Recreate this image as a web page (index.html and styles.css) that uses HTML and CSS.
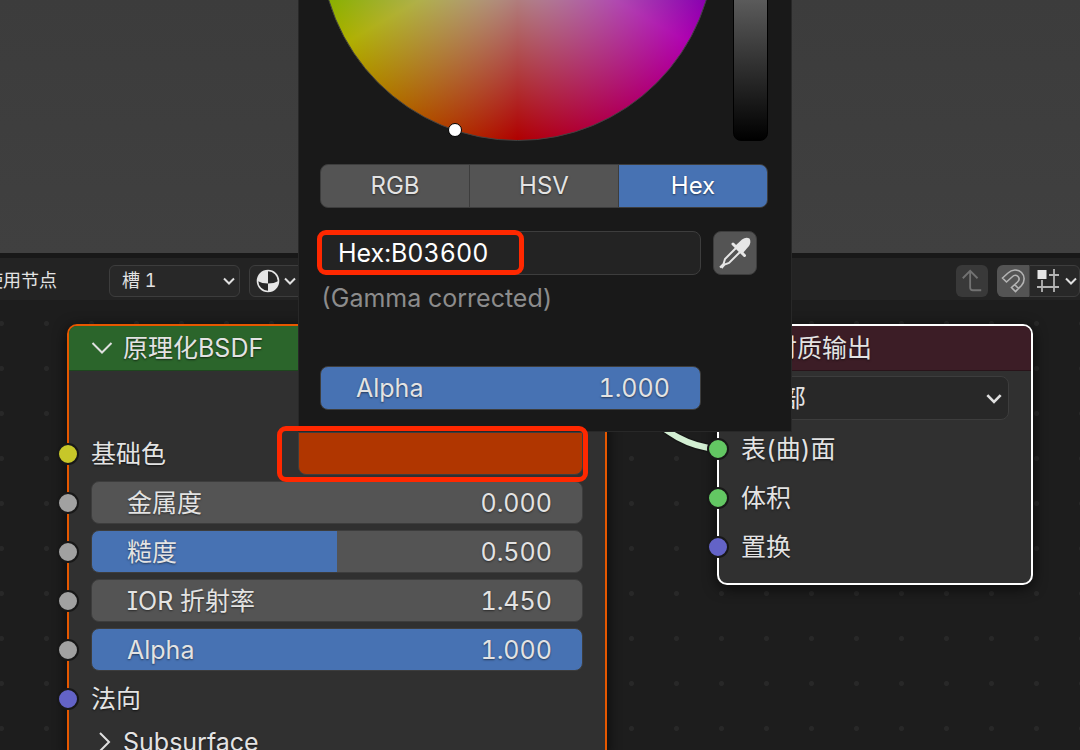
FILE: index.html
```html
<!DOCTYPE html>
<html lang="zh-CN">
<head>
  <meta charset="UTF-8" />
  <meta name="viewport" content="width=device-width, initial-scale=1.0"/>
  <title>原理化BSDF</title>
  <link rel="stylesheet" href="styles.css">
</head>
<body>

  <div class="viewport"></div>

  <!-- Header -->
  <header class="toolbar">
    <span class="use-nodes">使用节点</span>
    <div class="dropdown slot">
      <select aria-label="槽"><option>槽 1</option></select>
      <svg class="chevron" viewBox="0 0 12 8"><path d="M1 1.5l5 5 5-5"/></svg>
    </div>
    <button class="material" aria-label="材质">
      <svg class="ball" viewBox="0 0 24 24">
        <circle cx="12" cy="12" r="10.5" fill="none" stroke="#e6e6e6" stroke-width="1.6"/>
        <path d="M12 1.5A10.5 10.5 0 0 0 1.5 12Q6 14.5 12 14.5z" fill="#e6e6e6"/>
        <path d="M12 14.5Q18 14.5 22.5 12A10.5 10.5 0 0 1 12 22.5z" fill="#e6e6e6"/>
      </svg>
      <svg class="chevron" viewBox="0 0 12 8"><path d="M1 1.5l5 5 5-5"/></svg>
    </button>
    <div class="toolbar-right">
      <button class="parent" aria-label="上一级">
        <svg class="icon" viewBox="0 0 24 26"><path d="M2 10l8-8 8 8M10 2v18q0 3 3 3h9" fill="none" stroke="#727272" stroke-width="2"/></svg>
      </button>
      <div class="snap">
        <button class="magnet" aria-label="吸附">
          <svg class="icon" viewBox="0 0 24 24"><path d="M1.5 9L7 4C11 0 17 0 20.500 3.500S24 12.500 20.500 16.500L14.500 22.500L10.500 18.500L16.500 13C18.500 11 18.500 9 17 7.500S13 6 11 8L5.500 13zM17.500 19.500L13.500 15.500" fill="none" stroke="#b4b4b4" stroke-width="1.6"/></svg>
        </button>
        <button class="grid-snap" aria-label="吸附至">
          <svg class="icon" viewBox="0 0 24 24"><path d="M13 6h10M18 0v23M1 18h22M6 11v12" fill="none" stroke="#b4b4b4" stroke-width="1.8"/><path d="M1.500 1h9v9h-9z" fill="#e6e6e6"/></svg>
          <svg class="chevron" viewBox="0 0 12 8"><path d="M1 1.500l5 5 5-5"/></svg>
        </button>
      </div>
    </div>
  </header>

  <!-- Node editor -->
  <main class="canvas">
    <svg class="link" viewBox="0 0 110 60">
      <path d="M20 0C60 32 78 44 108 46" stroke="#161616" stroke-width="9"/>
      <path d="M20 0C60 32 78 44 108 46" stroke="#d3efd3" stroke-width="6"/>
    </svg>

    <section class="node bsdf">
      <h2 class="node-title">
        <svg class="fold" viewBox="0 0 22 14"><path d="M1.500 2L11 11.500 20.500 2"/></svg>
        原理化BSDF
      </h2>
      <div class="node-body">
        <div class="row">
          <i class="socket color"></i>
          <label for="base-color">基础色</label>
          <button class="swatch" id="base-color" aria-label="基础色"></button>
        </div>
        <div class="row">
          <i class="socket"></i>
          <label class="field" style="--fill: 0%">金属度 <input type="text" value="0.000"></label>
        </div>
        <div class="row">
          <i class="socket"></i>
          <label class="field" style="--fill: 50%">糙度 <input type="text" value="0.500"></label>
        </div>
        <div class="row">
          <i class="socket"></i>
          <label class="field" style="--fill: 0%">IOR 折射率 <input type="text" value="1.450"></label>
        </div>
        <div class="row">
          <i class="socket"></i>
          <label class="field" style="--fill: 100%">Alpha <input type="text" value="1.000"></label>
        </div>
        <div class="row">
          <i class="socket vector"></i>
          <span>法向</span>
        </div>
        <button class="panel">
          <svg class="unfold" viewBox="0 0 14 22"><path d="M2 2l9 9-9 9"/></svg>
          Subsurface
        </button>
      </div>
    </section>

    <section class="node output">
      <h2 class="node-title">材质输出</h2>
      <div class="node-body">
        <div class="dropdown target">
          <select aria-label="目标"><option>全部</option></select>
          <svg class="chevron" viewBox="0 0 12 8"><path d="M1 1.500l5 5 5-5"/></svg>
        </div>
        <div class="row"><i class="socket shader"></i><span>表(曲)面</span></div>
        <div class="row"><i class="socket shader"></i><span>体积</span></div>
        <div class="row"><i class="socket vector"></i><span>置换</span></div>
      </div>
    </section>
  </main>

  <!-- Color picker -->
  <div class="picker">
    <div class="wheel-row">
      <div class="wheel"><i class="cursor"></i></div>
      <div class="value-bar"></div>
    </div>
    <div class="tabs">
      <button>RGB</button>
      <button>HSV</button>
      <button class="active">Hex</button>
    </div>
    <div class="hex-row">
      <label class="hex">Hex:<input type="text" value="B03600"></label>
      <button class="eyedropper" aria-label="吸管">
        <svg viewBox="0 0 34 34">
          <path d="M18 12L7 23 5.500 28 2 31.500M22 16L11 27 6.500 28.500 3.500 32" fill="none" stroke="#e6e6e6" stroke-width="2"/>
          <path d="M15 8L26.500 19.500" stroke="#e6e6e6" stroke-width="3" stroke-linecap="round"/>
          <path d="M17 10L24 3.500Q28 0.500 31.500 2.500Q33.500 6 31 10L24.500 17.500z" fill="#e6e6e6"/>
        </svg>
      </button>
    </div>
    <p class="note">(Gamma corrected)</p>
    <label class="field" style="--fill: 100%">Alpha <input type="text" value="1.000"></label>
  </div>

  <!-- Highlights -->
  <div class="mark mark-hex"></div>
  <div class="mark mark-swatch"></div>

</body>
</html>
```
FILE: styles.css
```css
* {
  box-sizing: border-box;
}
body {
  position: relative;
  display: flex;
  flex-direction: column;
  height: 100vh;
  margin: 0;
  overflow: hidden;
  background: #1d1d1d;
  color: #e3e3e3;
  font-family: Inter, "Noto Sans CJK SC", sans-serif;
  font-size: 25px;
  line-height: 32px;
  font-feature-settings: "tnum", "cv08";
}
button, input, select {
  margin: 0;
  padding: 0;
  border: none;
  background: none;
  color: inherit;
  font: inherit;
  font-feature-settings: inherit;
}
select {
  appearance: none;
  width: 100%;
}
svg {
  display: block;
  flex: none;
}
.viewport {
  height: 253px;
  background: linear-gradient(#3c3c3c, #404040);
}

/* Header */
.toolbar {
  display: flex;
  align-items: center;
  height: 47px;
  padding-top: 3px;
  border-top: 5px solid #181818;
  background: #232323;
  font-size: 18px;
  line-height: 24px;
}
.use-nodes {
  display: flex;
  justify-content: flex-end;
  width: 57px;
  margin-right: 52px;
  white-space: nowrap;
}
.dropdown {
  position: relative;
  display: flex;
  align-items: center;
  border: 1px solid #3d3d3d;
  border-radius: 6px;
  background: #282828;
}
.chevron {
  width: 12px;
  height: 8px;
}
.chevron path, .fold path, .unfold path {
  fill: none;
  stroke: #e0e0e0;
  stroke-width: 2;
}
.dropdown .chevron {
  position: absolute;
  right: 4px;
  pointer-events: none;
}
.slot {
  width: 131px;
  height: 32px;
  margin-right: 9px;
}
.slot select {
  padding-left: 12px;
}
.material {
  display: flex;
  align-items: center;
  gap: 4px;
  width: 80px;
  height: 32px;
  padding-left: 6px;
  border: 1px solid #3d3d3d;
  border-radius: 6px;
  background: #282828;
}
.ball {
  width: 24px;
  height: 24px;
}
.toolbar-right {
  display: flex;
  gap: 9px;
  margin-left: auto;
}
.icon {
  width: 24px;
  height: 24px;
}
.parent, .magnet {
  display: grid;
  place-items: center;
  width: 32px;
  height: 32px;
  border-radius: 6px;
  background: #393939;
}
.snap {
  display: flex;
}
.magnet {
  border-radius: 6px 0 0 6px;
  background: #545454;
}
.grid-snap {
  display: flex;
  align-items: center;
  gap: 5px;
  width: 51px;
  padding-left: 6px;
  border: 1px solid #3d3d3d;
  border-radius: 0 6px 6px 0;
  background: #282828;
}

/* Node editor */
.canvas {
  position: relative;
  flex: 1;
  overflow: hidden;
  background: radial-gradient(circle, #282828 2px, transparent 3px) -21px 1px / 45px 45px;
}
.link {
  position: absolute;
  left: 610px;
  top: 103px;
  width: 110px;
  height: 60px;
}
.link path {
  fill: none;
}
.node {
  position: absolute;
  top: 24px;
  border-radius: 10px;
  background: #303030;
  box-shadow: 0 3px 14px rgba(0, 0, 0, 0.7);
  text-shadow: 0 1px 2px rgba(0, 0, 0, 0.6);
}
.bsdf {
  left: 67px;
  width: 540px;
  border: 2px solid #e65800;
}
.output {
  left: 717px;
  width: 316px;
  padding-bottom: 16px;
  border: 2px solid #fff;
}
.node-title {
  display: flex;
  align-items: center;
  gap: 10px;
  height: 45px;
  margin: 0;
  padding-left: 22px;
  border-bottom: 1px solid rgba(0, 0, 0, 0.3);
  border-radius: 8px 8px 0 0;
  background: #2b652b;
  font-size: 25px;
  font-weight: 400;
}
.output .node-title {
  padding-left: 53px;
  background: #3c1d26;
}
.fold {
  width: 22px;
  height: 14px;
}
.node-body {
  display: flex;
  flex-direction: column;
  gap: 6px;
  padding: 61px 22px 0;
}
.output .node-body {
  padding-top: 5px;
}
.output .row {
  top: 1px;
}
.row {
  position: relative;
  display: flex;
  align-items: center;
  justify-content: space-between;
  height: 43px;
}
.socket {
  position: absolute;
  left: -34px;
  width: 22px;
  height: 22px;
  border: 2px solid #181818;
  border-radius: 50%;
  background: #a1a1a1;
}
.socket.color {
  background: #c7c729;
}
.socket.vector {
  background: #6363c7;
}
.socket.shader {
  background: #63c763;
}
.field {
  display: flex;
  align-items: center;
  justify-content: space-between;
  width: 100%;
  height: 43px;
  padding: 0 30px 0 35px;
  border: 1px solid #3d3d3d;
  border-radius: 8px;
  background: linear-gradient(#4772b3, #4772b3) 0 0 / var(--fill) 100% no-repeat #545454;
  text-shadow: 0 1px 2px rgba(0, 0, 0, 0.5);
  white-space: nowrap;
}
.field input {
  width: 120px;
  text-align: right;
  text-shadow: inherit;
}
.swatch {
  width: 285px;
  height: 43px;
  border: 1px solid #3d3d3d;
  border-radius: 0 0 8px 8px;
  background: #b03600;
}
.panel {
  display: flex;
  align-items: center;
  gap: 11px;
  padding-left: 7px;
  text-shadow: inherit;
}
.unfold {
  width: 14px;
  height: 22px;
}
.target {
  height: 44px;
  border-radius: 8px;
}
.target select {
  padding-left: 14px;
}
.target .chevron {
  right: 6px;
  width: 16px;
  height: 11px;
}

/* Color picker */
.picker {
  position: absolute;
  top: 0;
  left: 298px;
  width: 494px;
  padding: 0 23px 21px 21px;
  border: 1px solid #282828;
  border-top: none;
  background: #191919;
  overflow: hidden;
}
.wheel-row {
  display: flex;
  justify-content: space-between;
  margin-top: -254px;
  margin-bottom: 23px;
}
.wheel {
  position: relative;
  width: 395px;
  height: 395px;
  border: 1px solid #424242;
  border-radius: 50%;
  background:
    radial-gradient(closest-side, #b0b0b0, rgba(176, 176, 176, 0)),
    conic-gradient(from 180deg, #b00000, #b0b000, #00b000, #00b0b0, #0000b0, #b000b0, #b00000);
}
.cursor {
  position: absolute;
  left: 127px;
  bottom: 3px;
  width: 14px;
  height: 14px;
  border: 1px solid #000;
  border-radius: 50%;
  background: #fff;
}
.value-bar {
  width: 35px;
  border: 1px solid #000;
  border-radius: 8px;
  background: linear-gradient(#fff, #000);
}
.tabs {
  display: flex;
  gap: 1px;
  height: 44px;
  margin-bottom: 23px;
  border: 1px solid #3d3d3d;
  border-radius: 8px;
  background: #3d3d3d;
  overflow: hidden;
}
.tabs button {
  flex: 1;
  background: #545454;
  font-size: 24px;
  text-shadow: 0 1px 2px rgba(0, 0, 0, 0.5);
}
.tabs .active {
  background: #4772b3;
  color: #fff;
}
.hex-row {
  display: flex;
  gap: 12px;
  height: 44px;
  margin-bottom: 7px;
}
.hex {
  display: flex;
  align-items: center;
  width: 381px;
  padding-left: 17px;
  border: 1px solid #3d3d3d;
  border-radius: 8px;
  background: #232323;
  color: #fff;
}
.hex input {
  flex: 1;
  min-width: 0;
}
.eyedropper {
  display: grid;
  place-items: center;
  width: 44px;
  border: 1px solid #3d3d3d;
  border-radius: 8px;
  background: #545454;
}
.eyedropper svg {
  width: 34px;
  height: 34px;
}
.note {
  margin: 0 0 52px 1px;
  color: #8c8c8c;
}
.picker .field {
  width: 381px;
  height: 44px;
}

/* Highlights */
.mark {
  position: absolute;
  border: 5px solid #ff2800;
  border-radius: 9px;
  pointer-events: none;
}
.mark-hex {
  top: 230px;
  left: 317px;
  width: 207px;
  height: 45px;
}
.mark-swatch {
  top: 426px;
  left: 277px;
  width: 311px;
  height: 56px;
}
```
